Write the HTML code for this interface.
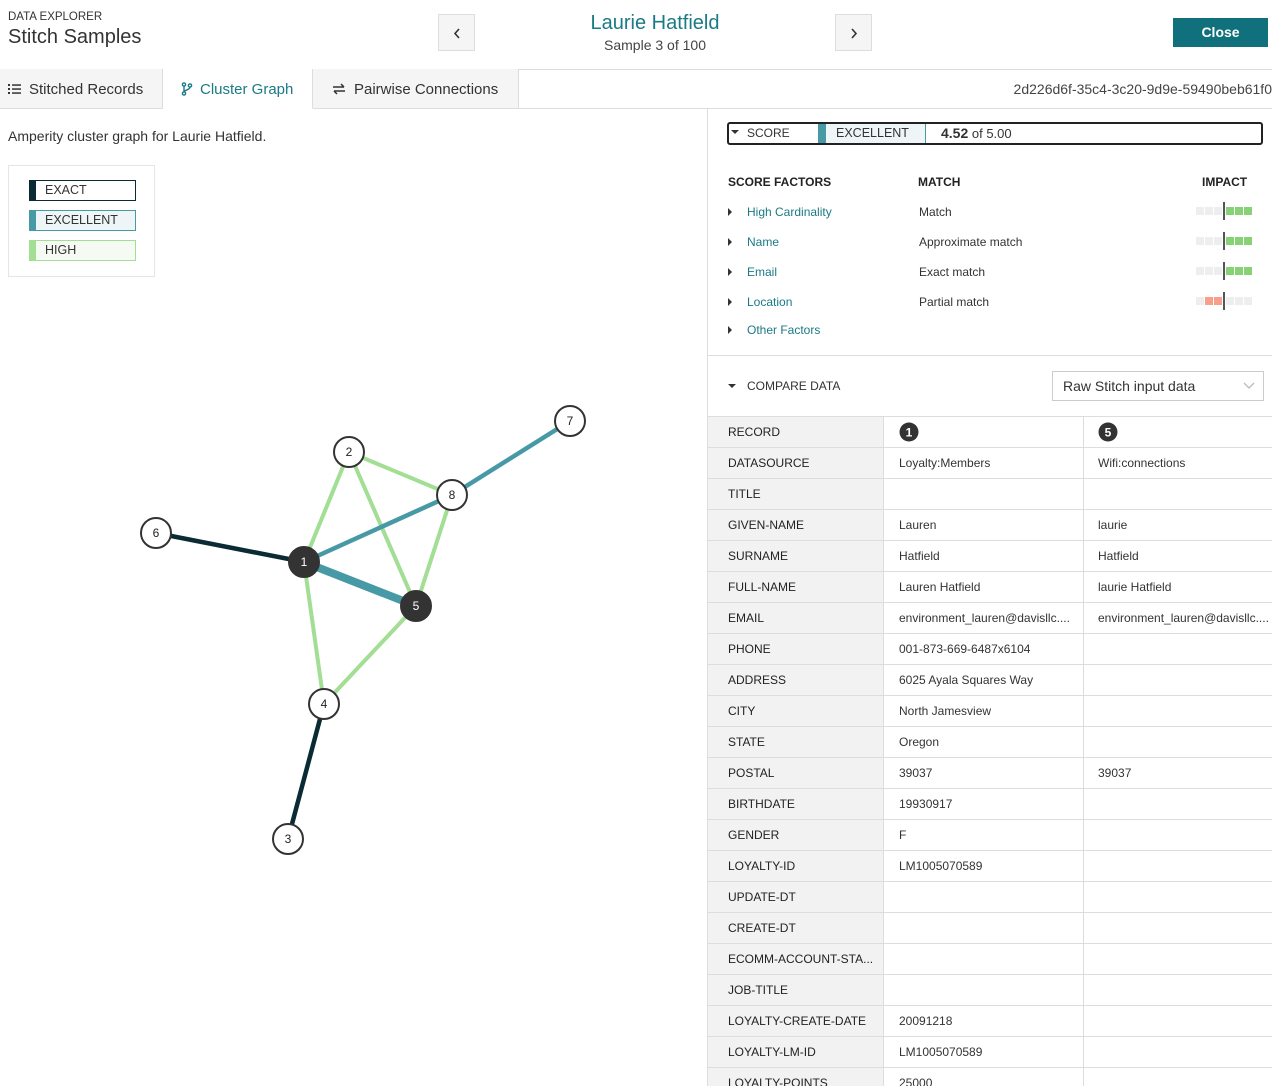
<!DOCTYPE html>
<html><head><meta charset="utf-8">
<style>
*{box-sizing:border-box;margin:0;padding:0}
html,body{width:1272px;height:1086px;overflow:hidden}
body{background:#fff;font-family:"Liberation Sans",sans-serif;color:#333;position:relative}
.a{position:absolute;white-space:nowrap}
.btn{position:absolute;width:37px;height:37px;border:1px solid #ddd;background:#f5f5f5;top:14px}
.tab{position:absolute;top:69px;height:40px;border-right:1px solid #ddd;background:#f5f5f5;font-size:15px;line-height:41px;border-bottom:1px solid #ddd}
.lg{position:absolute;left:29px;width:107px;height:21px;font-size:12.5px;line-height:19px;padding-left:9px;border:1px solid}
.sf{font-size:12px;color:#1a7a85}
.tri{position:absolute;width:0;height:0;border-top:4px solid transparent;border-bottom:4px solid transparent;border-left:4px solid #333}
.row{position:absolute;left:708px;width:564px;height:31px;border-top:1px solid #ddd;font-size:12px}
.row .l{position:absolute;left:0;top:0;width:176px;height:31px;background:#f2f2f2;border-right:1px solid #ddd;padding-left:20px;line-height:30px;color:#222}
.row .c1{position:absolute;left:177px;top:0;width:199px;height:31px;border-right:1px solid #ddd;padding-left:14px;line-height:30px;overflow:hidden}
.row .c2{position:absolute;left:390px;line-height:30px}
.bars{position:absolute;left:1196px;width:56px;height:18px}
.bars i{position:absolute;top:5px;width:8px;height:8px;background:#eee}
#wrap{position:absolute;left:0;top:0;width:1272px;height:1086px;overflow:hidden}
</style></head><body><div id="wrap">
<div class="a" style="left:8px;top:11px;font-size:11.5px;color:#333">DATA EXPLORER</div>
<div class="a" style="left:8px;top:26px;font-size:20px;color:#333">Stitch Samples</div>
<div class="btn" style="left:438px"><svg width="37" height="37"><path d="M20 14l-4 4.5 4 4.5" fill="none" stroke="#333" stroke-width="1.6"/></svg></div>
<div class="btn" style="left:835px"><svg width="37" height="37"><path d="M16 14l4 4.5-4 4.5" fill="none" stroke="#333" stroke-width="1.6"/></svg></div>
<div class="a" style="left:555px;width:200px;text-align:center;top:12px;font-size:20px;color:#1a7a85">Laurie Hatfield</div>
<div class="a" style="left:555px;width:200px;text-align:center;top:37px;font-size:14px;color:#444">Sample 3 of 100</div>
<div class="a" style="left:1173px;top:18px;width:95px;height:29px;background:#10717c;color:#fff;font-size:14px;font-weight:bold;text-align:center;line-height:29px">Close</div>
<div class="a" style="left:0;top:69px;width:1272px;height:1px;background:#ddd"></div>
<div class="a" style="left:0;top:108px;width:1272px;height:1px;background:#ddd"></div>
<div class="tab" style="left:0;width:163px;padding-left:8px"><svg width="14" height="12" style="vertical-align:-1px;margin-right:7px"><g fill="#333"><rect x="0" y="1" width="2" height="2"/><rect x="0" y="5" width="2" height="2"/><rect x="0" y="9" width="2" height="2"/><rect x="4" y="1.3" width="9" height="1.5"/><rect x="4" y="5.3" width="9" height="1.5"/><rect x="4" y="9.3" width="9" height="1.5"/></g></svg>Stitched Records</div>
<div class="tab" style="left:163px;width:150px;background:#fff;border-bottom:1px solid #fff;color:#1a7a85;padding-left:18px"><svg width="12" height="14" style="vertical-align:-2px;margin-right:7px"><g fill="none" stroke="#1a7a85" stroke-width="1.4"><circle cx="3" cy="2.5" r="1.6"/><circle cx="3" cy="11.5" r="1.6"/><circle cx="9" cy="3.5" r="1.6"/><path d="M3 4v6M9 5c0 3-6 3-6 5"/></g></svg>Cluster Graph</div>
<div class="tab" style="left:313px;width:206px;padding-left:19px"><svg width="14" height="12" style="vertical-align:-1px;margin-right:8px"><g fill="none" stroke="#333" stroke-width="1.5"><path d="M1 4h11M9 1l3 3M13 8H2M5 11l-3-3"/></g></svg>Pairwise Connections</div>
<div class="a" style="right:0;top:81px;font-size:14px;color:#444">2d226d6f-35c4-3c20-9d9e-59490beb61f0</div>

<div class="a" style="left:8px;top:128px;font-size:14px;color:#333">Amperity cluster graph for Laurie Hatfield.</div>
<div class="a" style="left:8px;top:165px;width:147px;height:112px;border:1px solid #e5e5e5"></div>
<div class="lg" style="top:180px;border-color:#0a2b33;border-left:7px solid #0a2b33;background:#fff">EXACT</div>
<div class="lg" style="top:210px;border-color:#4799a6;border-left:7px solid #4799a6;background:#eef5f6">EXCELLENT</div>
<div class="lg" style="top:240px;border-color:#a2de94;border-left:7px solid #a2de94;background:#f5fbf3">HIGH</div>

<svg class="a" style="left:0;top:0" width="706" height="1086">
<g stroke-linecap="round">
<line x1="349" y1="452" x2="452" y2="495" stroke="#a2de94" stroke-width="4"/>
<line x1="349" y1="452" x2="304" y2="562" stroke="#a2de94" stroke-width="4"/>
<line x1="349" y1="452" x2="416" y2="606" stroke="#a2de94" stroke-width="4"/>
<line x1="452" y1="495" x2="416" y2="606" stroke="#a2de94" stroke-width="4"/>
<line x1="304" y1="562" x2="324" y2="704" stroke="#a2de94" stroke-width="4"/>
<line x1="416" y1="606" x2="324" y2="704" stroke="#a2de94" stroke-width="4"/>
<line x1="570" y1="421" x2="452" y2="495" stroke="#4799a6" stroke-width="4.5"/>
<line x1="304" y1="562" x2="452" y2="495" stroke="#4799a6" stroke-width="4.5"/>
<line x1="304" y1="562" x2="416" y2="606" stroke="#4799a6" stroke-width="8"/>
<line x1="156" y1="533" x2="304" y2="562" stroke="#0a2b33" stroke-width="4.5"/>
<line x1="324" y1="704" x2="288" y2="839" stroke="#0a2b33" stroke-width="4.5"/>
</g>
<g stroke="#333" stroke-width="2" font-size="12" text-anchor="middle" font-family="Liberation Sans,sans-serif">
<circle cx="570" cy="421" r="15" fill="#fff"/><text x="570" y="425" stroke="none" fill="#222">7</text>
<circle cx="349" cy="452" r="15" fill="#fff"/><text x="349" y="456" stroke="none" fill="#222">2</text>
<circle cx="452" cy="495" r="15" fill="#fff"/><text x="452" y="499" stroke="none" fill="#222">8</text>
<circle cx="156" cy="533" r="15" fill="#fff"/><text x="156" y="537" stroke="none" fill="#222">6</text>
<circle cx="304" cy="562" r="15" fill="#333"/><text x="304" y="566" stroke="none" fill="#fff">1</text>
<circle cx="416" cy="606" r="15" fill="#333"/><text x="416" y="610" stroke="none" fill="#fff">5</text>
<circle cx="324" cy="704" r="15" fill="#fff"/><text x="324" y="708" stroke="none" fill="#222">4</text>
<circle cx="288" cy="839" r="15" fill="#fff"/><text x="288" y="843" stroke="none" fill="#222">3</text>
</g></svg>

<div class="a" style="left:707px;top:109px;width:1px;height:977px;background:#ddd"></div>
<div class="a" style="left:727px;top:122px;width:536px;height:23px;border:2px solid #222;border-radius:3px;overflow:hidden">
 <div class="tri" style="left:2px;top:6px;border-left:4px solid transparent;border-right:4px solid transparent;border-top:4px solid #333;border-bottom:0"></div>
 <div class="a" style="left:18px;top:2px;font-size:12px;color:#333">SCORE</div>
 <div class="a" style="left:89px;top:0;width:8px;height:19px;background:#4799a6"></div>
 <div class="a" style="left:97px;top:0;width:100px;height:19px;background:#eef5f6;border-right:1px solid #4799a6"></div>
 <div class="a" style="left:107px;top:2px;font-size:12.5px;color:#333">EXCELLENT</div>
 <div class="a" style="left:212px;top:1px;font-size:13px;color:#333"><b style="font-size:14px">4.52</b> of 5.00</div>
</div>
<div class="a" style="left:728px;top:175px;font-size:12px;font-weight:bold;color:#222">SCORE FACTORS</div>
<div class="a" style="left:918px;top:175px;font-size:12px;font-weight:bold;color:#222">MATCH</div>
<div class="a" style="left:1202px;top:175px;font-size:12px;font-weight:bold;color:#222">IMPACT</div>

<div class="tri" style="left:728px;top:208px"></div><div class="a sf" style="left:747px;top:205px">High Cardinality</div><div class="a" style="left:919px;top:205px;font-size:12px">Match</div>
<div class="tri" style="left:728px;top:238px"></div><div class="a sf" style="left:747px;top:235px">Name</div><div class="a" style="left:919px;top:235px;font-size:12px">Approximate match</div>
<div class="tri" style="left:728px;top:268px"></div><div class="a sf" style="left:747px;top:265px">Email</div><div class="a" style="left:919px;top:265px;font-size:12px">Exact match</div>
<div class="tri" style="left:728px;top:298px"></div><div class="a sf" style="left:747px;top:295px">Location</div><div class="a" style="left:919px;top:295px;font-size:12px">Partial match</div>
<div class="tri" style="left:728px;top:326px"></div><div class="a sf" style="left:747px;top:323px">Other Factors</div>

<div class="bars" style="top:202px"><i style="left:0"></i><i style="left:9px"></i><i style="left:18px"></i><i style="left:30px;background:#86d274"></i><i style="left:39px;background:#86d274"></i><i style="left:48px;background:#86d274"></i><b style="position:absolute;left:27px;top:0;width:1.5px;height:18px;background:#555"></b></div>
<div class="bars" style="top:232px"><i style="left:0"></i><i style="left:9px"></i><i style="left:18px"></i><i style="left:30px;background:#86d274"></i><i style="left:39px;background:#86d274"></i><i style="left:48px;background:#86d274"></i><b style="position:absolute;left:27px;top:0;width:1.5px;height:18px;background:#555"></b></div>
<div class="bars" style="top:262px"><i style="left:0"></i><i style="left:9px"></i><i style="left:18px"></i><i style="left:30px;background:#86d274"></i><i style="left:39px;background:#86d274"></i><i style="left:48px;background:#86d274"></i><b style="position:absolute;left:27px;top:0;width:1.5px;height:18px;background:#555"></b></div>
<div class="bars" style="top:292px"><i style="left:0"></i><i style="left:9px;background:#f99e8a"></i><i style="left:18px;background:#f99e8a"></i><i style="left:30px"></i><i style="left:39px"></i><i style="left:48px"></i><b style="position:absolute;left:27px;top:0;width:1.5px;height:18px;background:#555"></b></div>

<div class="a" style="left:708px;top:355px;width:564px;height:1px;background:#ddd"></div>
<div class="tri" style="left:728px;top:384px;border-left:4px solid transparent;border-right:4px solid transparent;border-top:4px solid #333;border-bottom:0"></div>
<div class="a" style="left:747px;top:379px;font-size:12px;color:#333">COMPARE DATA</div>
<div class="a" style="left:1052px;top:371px;width:212px;height:30px;border:1px solid #ccc;font-size:14px;line-height:28px;padding-left:10px;color:#333">Raw Stitch input data<svg style="position:absolute;right:8px;top:10px" width="12" height="8"><path d="M1 1l5 5 5-5" fill="none" stroke="#bbb" stroke-width="1.3"/></svg></div>

<div class="row" style="top:416px"><div class="l">RECORD</div><div class="c1"><svg width="20" height="20" style="margin-top:5px"><circle cx="10" cy="10" r="9.5" fill="#333"/><text x="10" y="14.5" fill="#fff" font-size="12" font-weight="bold" text-anchor="middle" font-family="Liberation Sans">1</text></svg></div><div class="c2"><svg width="20" height="20" style="margin-top:5px"><circle cx="10" cy="10" r="9.5" fill="#333"/><text x="10" y="14.5" fill="#fff" font-size="12" font-weight="bold" text-anchor="middle" font-family="Liberation Sans">5</text></svg></div></div>
<div class="row" style="top:447px"><div class="l">DATASOURCE</div><div class="c1">Loyalty:Members</div><div class="c2">Wifi:connections</div></div>
<div class="row" style="top:478px"><div class="l">TITLE</div><div class="c1"></div></div>
<div class="row" style="top:509px"><div class="l">GIVEN-NAME</div><div class="c1">Lauren</div><div class="c2">laurie</div></div>
<div class="row" style="top:540px"><div class="l">SURNAME</div><div class="c1">Hatfield</div><div class="c2">Hatfield</div></div>
<div class="row" style="top:571px"><div class="l">FULL-NAME</div><div class="c1">Lauren Hatfield</div><div class="c2">laurie Hatfield</div></div>
<div class="row" style="top:602px"><div class="l">EMAIL</div><div class="c1">environment_lauren@davisllc....</div><div class="c2">environment_lauren@davisllc....</div></div>
<div class="row" style="top:633px"><div class="l">PHONE</div><div class="c1">001-873-669-6487x6104</div></div>
<div class="row" style="top:664px"><div class="l">ADDRESS</div><div class="c1">6025 Ayala Squares Way</div></div>
<div class="row" style="top:695px"><div class="l">CITY</div><div class="c1">North Jamesview</div></div>
<div class="row" style="top:726px"><div class="l">STATE</div><div class="c1">Oregon</div></div>
<div class="row" style="top:757px"><div class="l">POSTAL</div><div class="c1">39037</div><div class="c2">39037</div></div>
<div class="row" style="top:788px"><div class="l">BIRTHDATE</div><div class="c1">19930917</div></div>
<div class="row" style="top:819px"><div class="l">GENDER</div><div class="c1">F</div></div>
<div class="row" style="top:850px"><div class="l">LOYALTY-ID</div><div class="c1">LM1005070589</div></div>
<div class="row" style="top:881px"><div class="l">UPDATE-DT</div><div class="c1"></div></div>
<div class="row" style="top:912px"><div class="l">CREATE-DT</div><div class="c1"></div></div>
<div class="row" style="top:943px"><div class="l">ECOMM-ACCOUNT-STA...</div><div class="c1"></div></div>
<div class="row" style="top:974px"><div class="l">JOB-TITLE</div><div class="c1"></div></div>
<div class="row" style="top:1005px"><div class="l">LOYALTY-CREATE-DATE</div><div class="c1">20091218</div></div>
<div class="row" style="top:1036px"><div class="l">LOYALTY-LM-ID</div><div class="c1">LM1005070589</div></div>
<div class="row" style="top:1067px"><div class="l">LOYALTY-POINTS</div><div class="c1">25000</div></div>
</div></body></html>
